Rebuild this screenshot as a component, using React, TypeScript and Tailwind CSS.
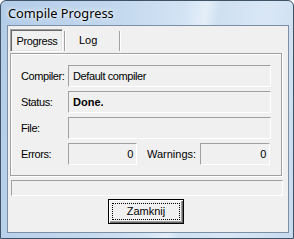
import React from "react";

const sunken =
  "border border-t-[#a0a0a0] border-l-[#a0a0a0] border-b-white border-r-white";

function Field({ w, children, right, bold }: { w: string; children?: React.ReactNode; right?: boolean; bold?: boolean }) {
  return (
    <div
      className={`${w} h-[22px] ${sunken} flex items-center ${right ? "justify-end pr-[3px]" : "pl-[4px]"} ${bold ? "font-bold tracking-normal" : ""}`}
    >
      {children}
    </div>
  );
}

function Sep() {
  return <div className="ml-[1px] mt-[2px] w-[2px] h-[20px] border-l border-l-[#a0a0a0] border-r border-r-white" />;
}

export default function App() {
  return (
    <div
      className="w-[294px] h-[239px] flex flex-col border border-[#3e5366] rounded-t-[6px] overflow-hidden text-black bg-[linear-gradient(100deg,#b2cce8_0%,#c3d8ee_35%,#d2e3f4_55%,#e4eef8_62%,#cfe0f2_66%,#d9e7f5_80%,#c7dbef_100%)]"
      style={{ fontFamily: '"Liberation Sans", Arial, sans-serif' }}
    >
      {/* Title bar */}
      <div
        className="h-[24px] pl-[7px] pt-[1px] flex items-center text-[12.8px] text-black"
        style={{ fontFamily: '"Noto Sans", "Open Sans", sans-serif', textShadow: "0 0 6px #fff, 0 0 3px #fff" }}
      >
        Compile Progress
      </div>

      {/* Client */}
      <div className="ml-[6px] w-[282px] h-[208px] border border-[#7b8fa5] bg-[#f0f0f0] flex flex-col text-[11px] tracking-[-0.4px]">
        <div className="pt-[3px] pl-[2px] flex">
          {/* Progress tab (pressed) */}
          <div className="w-[53px] h-[23px] border border-t-[#a0a0a0] border-l-[#a0a0a0] border-b-white border-r-white shadow-[inset_1px_1px_0_#696969,inset_-1px_-1px_0_#e3e3e3] flex items-center justify-center pt-[1px] pl-[1px]">
            Progress
          </div>
          <Sep />
          {/* Log tab (flat) */}
          <div className="w-[52px] h-[23px] flex items-center pl-[13px] tracking-normal">Log</div>
          <Sep />
        </div>

        {/* Panel */}
        <div className="ml-[2px] mt-[1px] w-[272px] h-[123px] border border-[#a0a0a0] shadow-[inset_1px_1px_0_#fff,1px_1px_0_#fff] pt-[11px] pl-[10px] flex flex-col gap-[4px]">
          <div className="flex items-center">
            <div className="w-[47px]">Compiler:</div>
            <Field w="w-[203px]">Default compiler</Field>
          </div>
          <div className="flex items-center">
            <div className="w-[47px]">Status:</div>
            <Field w="w-[203px]" bold>
              Done.
            </Field>
          </div>
          <div className="flex items-center">
            <div className="w-[47px]">File:</div>
            <Field w="w-[203px]" />
          </div>
          <div className="flex items-center">
            <div className="w-[47px]">Errors:</div>
            <Field w="w-[69px]" right>
              0
            </Field>
            <div className="ml-[10px] w-[53px] tracking-normal">Warnings:</div>
            <Field w="w-[70px]" right>
              0
            </Field>
          </div>
        </div>

        {/* Progress/status field */}
        <div className={`ml-[3px] mt-[4px] w-[272px] h-[16px] ${sunken}`} />

        {/* Button */}
        <div className="ml-[100px] mt-[3px] w-[76px] h-[25px] border border-black bg-[#f0f0f0] shadow-[inset_1px_1px_0_#fff,inset_-1px_-1px_0_#696969,inset_-2px_-2px_0_#a0a0a0] p-[3px] flex">
          <div className="flex-1 border border-dotted border-black flex items-center justify-center tracking-normal">
            Zamknij
          </div>
        </div>
      </div>
    </div>
  );
}
